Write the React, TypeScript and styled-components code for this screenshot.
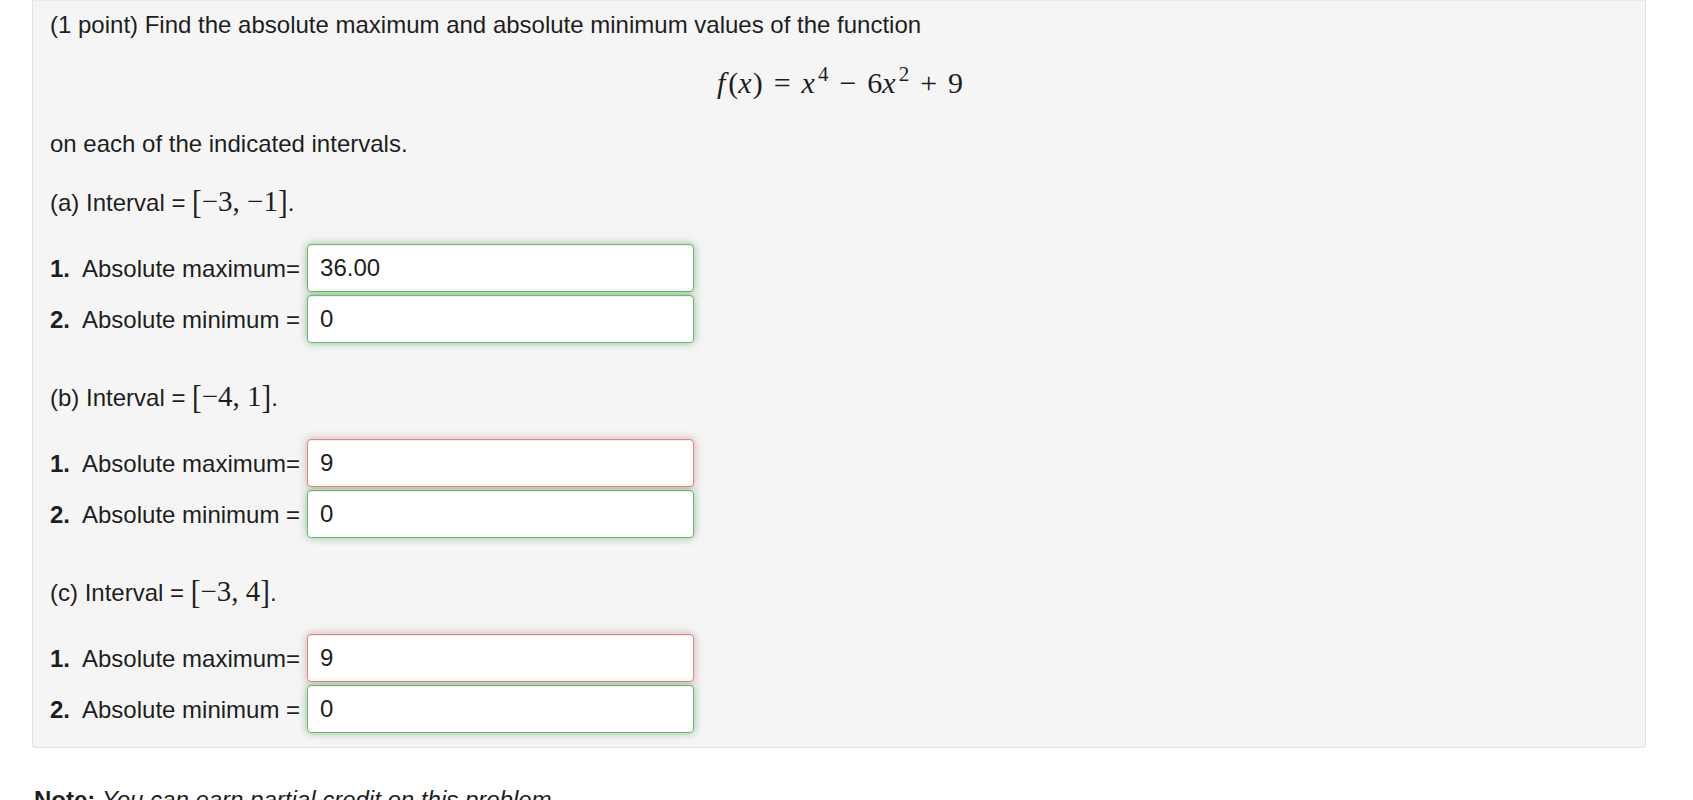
import React from 'react'
import styled, { createGlobalStyle } from 'styled-components'

const GlobalStyle = createGlobalStyle`
  html, body {
    margin: 0;
    padding: 0;
    background: #fff;
  }
  body {
    font-family: "Liberation Sans", Arial, sans-serif;
    font-size: 24px;
    line-height: 33px;
    color: #1e1e1e;
  }
`

const Page = styled.div`
  width: 1614px;
  padding-left: 32px;
`

const Well = styled.div`
  background: #f5f5f5;
  border: 1px solid #e1e1e1;
  border-top: none;
  border-radius: 0 0 4px 4px;
  box-shadow: inset 0 1px 1px rgba(0, 0, 0, 0.05);
  padding: 8px 19px 14px 17px;
`

const Para = styled.p<{ $top?: number }>`
  margin: ${p => p.$top ?? 0}px 0 0;
  line-height: 33px;
  height: 33px;
  white-space: nowrap;
`

const Display = styled.div`
  margin-top: 22px;
  height: 40px;
  line-height: 40px;
  text-align: center;
  font-family: "Liberation Serif", "Times New Roman", serif;
  font-size: 30px;
  padding-left: 4px;
`

const Math = styled.span`
  font-family: "Liberation Serif", "Times New Roman", serif;
  font-size: 29px;
`

const V = styled.i<{ $gap?: number }>`
  font-style: italic;
  padding-right: ${p => p.$gap ?? 1}px;
`

const Sup = styled.sup`
  font-size: 21px;
  vertical-align: 0;
  position: relative;
  top: -12px;
  margin-left: 2px;
`

const Op = styled.span`
  margin: 0 11px;
`

const Bracket = styled.span`
  display: inline-block;
  transform: scaleY(1.18);
`

const Rows = styled.div<{ $top: number }>`
  margin-top: ${p => p.$top}px;
  display: flex;
  flex-direction: column;
  gap: 3px;
`

const Row = styled.div`
  display: flex;
  align-items: center;
  gap: 7px;
  height: 48px;
  white-space: nowrap;
`

const Num = styled.b`
  margin-right: 12px;
`

const Answer = styled.input<{ $ok: boolean }>`
  box-sizing: border-box;
  width: 387px;
  height: 48px;
  padding: 0 12px;
  font-family: "Liberation Sans", Arial, sans-serif;
  font-size: 24px;
  color: #1e1e1e;
  background: #fff;
  border-radius: 4px;
  border: 1px solid ${p => (p.$ok ? '#72b472' : '#d68c8c')};
  box-shadow: inset 0 1px 1px rgba(0, 0, 0, 0.075),
    0 0 8px ${p => (p.$ok ? 'rgba(81, 153, 81, 0.6)' : 'rgba(191, 84, 84, 0.5)')};
  outline: none;
`

const Note = styled.p`
  margin: 35px 0 0 2px;
  line-height: 33px;
`

type Part = {
  letter: string
  interval: [string, string]
  max: { value: string; ok: boolean }
  min: { value: string; ok: boolean }
}

const parts: Part[] = [
  { letter: 'a', interval: ['−3', '−1'], max: { value: '36.00', ok: true }, min: { value: '0', ok: true } },
  { letter: 'b', interval: ['−4', '1'], max: { value: '9', ok: false }, min: { value: '0', ok: true } },
  { letter: 'c', interval: ['−3', '4'], max: { value: '9', ok: false }, min: { value: '0', ok: true } },
]

export default function App() {
  return <>
    <GlobalStyle />
    <Page>
      <Well>
        <Para>(1 point) Find the absolute maximum and absolute minimum values of the function</Para>
        <Display>
          <V $gap={3}>f</V>(<V>x</V>)<Op>=</Op><V>x</V><Sup>4</Sup><Op>−</Op>6<V>x</V><Sup>2</Sup><Op>+</Op>9
        </Display>
        <Para $top={24}>on each of the indicated intervals.</Para>
        {parts.map((part, i) => (
          <React.Fragment key={part.letter}>
            <Para $top={i === 0 ? 25 : 37}>
              ({part.letter}) Interval = <Math><Bracket>[</Bracket>{part.interval[0]}, {part.interval[1]}<Bracket>]</Bracket></Math>.
            </Para>
            <Rows $top={26}>
              <Row>
                <span><Num>1.</Num>Absolute maximum=</span>
                <Answer readOnly value={part.max.value} $ok={part.max.ok} />
              </Row>
              <Row>
                <span><Num>2.</Num>Absolute minimum =</span>
                <Answer readOnly value={part.min.value} $ok={part.min.ok} />
              </Row>
            </Rows>
          </React.Fragment>
        ))}
      </Well>
      <Note><b>Note:</b> <i>You can earn partial credit on this problem.</i></Note>
    </Page>
  </>
}
